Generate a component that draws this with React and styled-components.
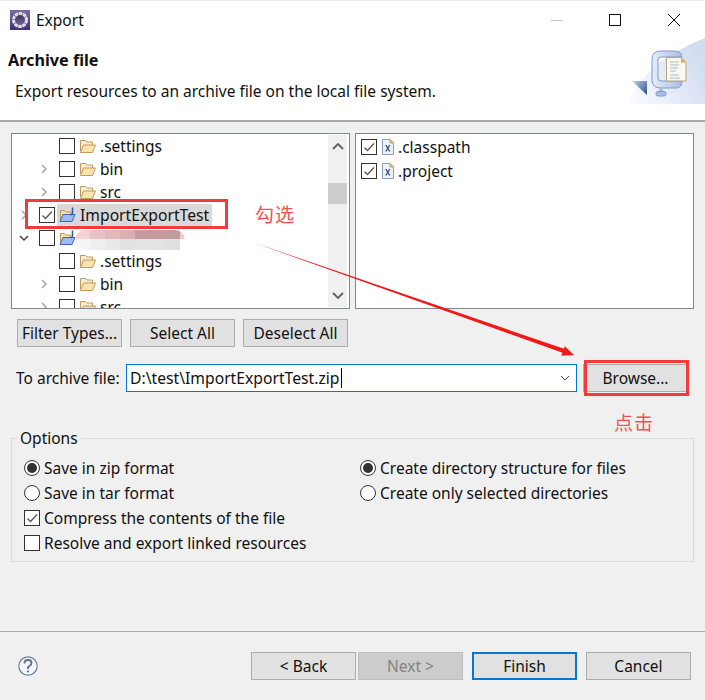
import React from 'react';
import styled, { createGlobalStyle } from 'styled-components';

const Global = createGlobalStyle`
  html, body { margin: 0; padding: 0; background: #f0f0f0; overflow: hidden; }
  * { box-sizing: border-box; }
`;

const FONT = `"Noto Sans", "Open Sans", "Noto Sans CJK SC", sans-serif`;

const Window = styled.div`
  position: relative;
  width: 705px;
  height: 700px;
  overflow: hidden;
  background: #f0f0f0;
  font-family: ${FONT};
  font-size: 15.5px;
  color: #111;
  display: flex;
  flex-direction: column;
`;

const TitleBar = styled.div`
  height: 39px;
  flex: none;
  background: #fff;
  border-top: 1px solid #eee;
  display: flex;
  align-items: center;
  padding: 0 2px 1px 10px;
  gap: 6px;
`;
const TitleText = styled.span`flex: 1; line-height: 20px;`;
const WinButtons = styled.div`display: flex;`;
const WinButton = styled.div`
  width: 58.5px;
  height: 36px;
  display: flex;
  align-items: center;
  justify-content: center;
`;

const Banner = styled.div`
  position: relative;
  height: 83px;
  flex: none;
  background: #fff;
  border-bottom: 2px solid #a9a9a9;
  padding: 0 8px;
`;
const BannerTitle = styled.div`
  font-weight: 700;
  font-size: 16.2px;
  line-height: 22px;
  margin-top: 10px;
`;
const BannerText = styled.div`
  margin: 10px 0 0 7px;
  line-height: 20px;
`;
const BannerArt = styled.svg`
  position: absolute;
  right: 0;
  top: -1px;
`;

const Lists = styled.div`
  display: flex;
  gap: 5px;
  margin: 11px 11px 0;
  height: 176px;
  flex: none;
`;
const TreePanel = styled.div`
  width: 339px;
  flex: none;
  background: #fff;
  border: 1px solid #828790;
  overflow: hidden;
  display: flex;
`;
const TreeBody = styled.div`
  flex: 1;
  overflow: hidden;
  padding-left: 7px;
`;
const FilePanel = styled.div`
  width: 339px;
  flex: none;
  background: #fff;
  border: 1px solid #828790;
  padding-top: 1px;
`;
const TreeRow = styled.div`
  height: 23px;
  display: flex;
  align-items: center;
  padding-left: ${p => p.$level * 20}px;
`;
const Twisty = styled.span`
  width: 20px;
  height: 16px;
  flex: none;
  display: flex;
  align-items: center;
`;
const Label = styled.span`
  margin-left: 4px;
  line-height: 20px;
  white-space: nowrap;
  font-size: ${p => (p.$selected ? '15.7px' : 'inherit')};
  padding-right: ${p => (p.$selected ? '3px' : 0)};
`;
const SelectedBlock = styled.span`
  display: flex;
  align-items: center;
  height: 22px;
  margin-left: 2px;
  background: ${p => (p.$on ? '#d9d9d9' : 'transparent')};
`;
const FolderSlot = styled.span`display: flex; margin-left: 3px;`;
const ProjectSlot = styled.span`display: flex; margin-left: 2px;`;
const FileRow = styled.div`
  height: 24px;
  display: flex;
  align-items: center;
  padding-left: 5px;
  gap: 5px;
`;
const FileLabel = styled.span`line-height: 20px; margin-left: -1px;`;
const CheckBoxFrame = styled.span`
  width: 16px;
  height: 16px;
  flex: none;
  background: #fff;
  border: 1px solid #333;
  display: flex;
  align-items: center;
  justify-content: center;
`;
const Scrollbar = styled.div`
  width: 19px;
  margin: 1px 2px 0 0;
  height: 172px;
  flex: none;
  background: #f0f0f0;
  display: flex;
  flex-direction: column;
  align-items: center;
  justify-content: space-between;
  padding: 7px 0;
  position: relative;
`;
const ScrollThumb = styled.div`
  position: absolute;
  top: 48px;
  left: 0;
  width: 19px;
  height: 21px;
  background: #cdcdcd;
`;

const ButtonRow = styled.div`
  display: flex;
  gap: 8px;
  margin: 10px 0 0 17px;
  flex: none;
`;
const Btn = styled.div`
  width: 105px;
  height: 28px;
  flex: none;
  display: flex;
  align-items: center;
  justify-content: center;
  background: ${p => (p.$disabled ? '#cccccc' : '#e1e1e1')};
  color: ${p => (p.$disabled ? '#838383' : '#111')};
  border: ${p => (p.$default ? '2px solid #0078d7' : p.$disabled ? '1px solid #bfbfbf' : '1px solid #adadad')};
  white-space: nowrap;
`;

const ArchiveRow = styled.div`
  display: flex;
  align-items: center;
  margin: 17px 14px 0 16px;
  height: 28px;
  flex: none;
`;
const ArchiveLabel = styled.span`
  width: 110px;
  flex: none;
  white-space: nowrap;
`;
const Combo = styled.div`
  width: 451px;
  height: 28px;
  flex: none;
  background: #fff;
  border: 1px solid #0078d7;
  display: flex;
  align-items: center;
  padding: 0 6px 0 3px;
`;
const ComboText = styled.span`
  border-right: 1px solid #000;
  font-size: 15.7px;
  line-height: 20px;
  padding-right: 1px;
`;
const ComboChevron = styled.svg`margin-left: auto;`;
const BrowseSlot = styled.div`margin-left: 6px;`;

const Options = styled.fieldset`
  margin: 37px 11px 0;
  padding: 0;
  height: 133px;
  border: 1px solid #dcdcdc;
  flex: none;
  min-width: 0;
`;
const Legend = styled.legend`
  margin-left: 6px;
  padding: 0 3px 0 2px;
  line-height: 18px;
`;
const OptionsGrid = styled.div`
  display: grid;
  grid-template-columns: 336px 1fr;
  padding: 8px 0 0 12px;
`;
const OptionColumn = styled.div`display: flex; flex-direction: column;`;
const OptionRow = styled.div`
  height: 25px;
  display: flex;
  align-items: center;
  gap: 4px;
  white-space: nowrap;
`;
const Radio = styled.span`
  width: 16px;
  height: 16px;
  flex: none;
  border-radius: 50%;
  background: #fff;
  border: 1px solid #333;
  display: flex;
  align-items: center;
  justify-content: center;
  &::after {
    content: '';
    width: 10px;
    height: 10px;
    border-radius: 50%;
    background: ${p => (p.$on ? '#333' : 'transparent')};
  }
`;

const FooterRule = styled.div`
  margin-top: 69px;
  height: 1px;
  flex: none;
  background: #a9a9a9;
`;
const Footer = styled.div`
  display: flex;
  align-items: center;
  margin: 20px 14px 0 18px;
  height: 28px;
  flex: none;
`;
const Help = styled.svg`margin-right: auto;`;
const BackNext = styled.div`display: flex; gap: 2px; margin-right: 9px;`;
const FinishCancel = styled.div`display: flex; gap: 9px;`;

const Overlay = styled.svg`
  position: absolute;
  inset: 0;
  pointer-events: none;
`;
const Note = styled.span`
  position: absolute;
  left: ${p => p.$x}px;
  top: ${p => p.$y}px;
  color: #f65050;
  font-family: "Noto Sans CJK SC", sans-serif;
  font-size: 19px;
  line-height: 24px;
  letter-spacing: 1px;
`;
const Smudge = styled.div`
  position: absolute;
  left: 75px;
  top: 230px;
  display: grid;
  grid-template-columns: repeat(7, 15px) 5px;
  grid-template-rows: 9px 11px;
  border-radius: 10px 10px 0 10px;
  overflow: hidden;
`;
const SmudgeCell = styled.span`background: ${p => p.$c};`;

const Chevron = ({ open, color = '#a6a6a6' }) => (
  <svg width="10" height="10" viewBox="0 0 10 10" fill="none" stroke={color} strokeWidth="1.5">
    <path d={open ? 'M1 3l4 4 4-4' : 'M3 1l4 4-4 4'} />
  </svg>
);

const ScrollArrow = ({ dir }) => (
  <svg width="12" height="8" viewBox="0 0 12 8" fill="none" stroke="#606060" strokeWidth="1.8">
    <path d={dir === 'up' ? 'M1 7l5-5 5 5' : 'M1 1l5 5 5-5'} />
  </svg>
);

const Tick = () => (
  <svg width="12" height="12" viewBox="0 0 12 12" fill="none" stroke="#555" strokeWidth="1.3">
    <path d="M1.5 6.5l3 3L11 2.5" />
  </svg>
);

const CheckBox = ({ on }) => <CheckBoxFrame>{on && <Tick />}</CheckBoxFrame>;

const FolderOpen = () => (
  <svg width="16" height="16" viewBox="0 0 16 16">
    <path d="M.5 13V2.500h5l1.500 1.500h5.500v3" fill="#f9ecd0" stroke="#c29a63" />
    <path d="M.5 14.500l3-7.500h12l-3 7.500z" fill="#fbe3ae" stroke="#c29a63" />
  </svg>
);

const ProjectFolder = () => (
  <svg width="17" height="16" viewBox="0 0 17 16">
    <path d="M1.500 12V3.500h4l1.300 1.500h5v3" fill="#f8e2a8" stroke="#b89b58" />
    <path d="M1 14.500l3-7h12l-3 7z" fill="#9dbcec" stroke="#3c67b5" />
    <path d="M13.500 .5v5.500q0 1.800-2.200 1.500" fill="none" stroke="#2a58b0" strokeWidth="1.500" />
  </svg>
);

const XmlFile = () => (
  <svg width="12" height="16" viewBox="0 0 12 16">
    <path d="M.5.5h7.500l3.500 3.500v11.500h-11z" fill="#eef2f8" stroke="#8c9dbb" />
    <path d="M8 .5v3.500h3.500z" fill="#d8bd82" stroke="#c5a566" />
    <path d="M3.800 6l4 6.500M7.800 6l-4 6.500" stroke="#2f4f86" strokeWidth="1.300" />
  </svg>
);

const AppIcon = () => (
  <svg width="20" height="20" viewBox="0 0 20 20">
    <defs>
      <linearGradient id="appbg" x1="0" y1="0" x2="0" y2="1">
        <stop offset="0" stopColor="#7a6ca0" />
        <stop offset="1" stopColor="#43307a" />
      </linearGradient>
      <linearGradient id="appcore" x1="0" y1="0" x2="0" y2="1">
        <stop offset="0" stopColor="#33304a" />
        <stop offset="1" stopColor="#7a6aa5" />
      </linearGradient>
    </defs>
    <rect width="20" height="20" fill="url(#appbg)" />
    <circle cx="10" cy="10" r="6.500" fill="url(#appcore)" stroke="#dfdfe6" strokeWidth="3" strokeDasharray="3.500 .6" />
  </svg>
);

const WizardArt = () => (
  <BannerArt width="76" height="66" viewBox="0 0 76 66">
    <defs>
      <linearGradient id="wash" x1="0" y1="1" x2="1" y2="0.500">
        <stop offset="0" stopColor="#fbfcfe" />
        <stop offset="1" stopColor="#d3ddf2" />
      </linearGradient>
      <linearGradient id="clamp" x1="0" y1="0" x2="1" y2="0">
        <stop offset="0" stopColor="#e6ecf8" />
        <stop offset="1" stopColor="#a9bde4" />
      </linearGradient>
      <linearGradient id="tri" x1="0" y1="0" x2="1" y2="1">
        <stop offset="0" stopColor="#c5d4ec" />
        <stop offset="1" stopColor="#234a8c" />
      </linearGradient>
    </defs>
    <path d="M0 66Q14 24 76 0V66z" fill="url(#wash)" />
    <path d="M3 43h15v14z" fill="url(#tri)" />
    <path d="M32 13h13q8 0 8 6h-21q-3 0-3 3v18q0 3 3 3h21q0 7-6 7h-15q-9 0-9-8v-21q0-8 9-8z" fill="url(#clamp)" stroke="#7f9bcb" />
    <rect x="30" y="50" width="4" height="4" fill="#a9bde4" />
    <rect x="27" y="53.500" width="10" height="4.500" rx="2" fill="#a9bde4" stroke="#7f9bcb" />
    <path d="M37.500 19.500h14.500l5 5v18.500h-19.500z" fill="#fbf9ef" stroke="#b6a77f" />
    <path d="M52 19.500l5 5h-5z" fill="#e9a24c" />
    <path d="M41 24h9M41 27h9M41 30h8M41 33h6M41 37h9M41 40h10" stroke="#a8b8d2" strokeWidth="1.200" />
  </BannerArt>
);

const FolderRow = ({ name, twisty }) => (
  <TreeRow $level={1}>
    <Twisty>{twisty && <Chevron />}</Twisty>
    <CheckBox />
    <SelectedBlock>
      <FolderSlot><FolderOpen /></FolderSlot>
      <Label>{name}</Label>
    </SelectedBlock>
  </TreeRow>
);

const smudge = [
  '#f2d2d2', '#e9c3c3', '#e4b8b8', '#d9b0b2', '#c49a9c', '#c49a9c', '#bf9c9e', '#f0c8c8',
  '#f5f5f5', '#eeeeee', '#e9e9e9', '#e2e2e2', '#e4e4e4', '#e4e4e4', '#e0e0e0', 'transparent',
];

export default function App() {
  return (
    <Window>
      <Global />
      <TitleBar>
        <AppIcon />
        <TitleText>Export</TitleText>
        <WinButtons>
          <WinButton>
            <svg width="12" height="12"><path d="M0 6.500h12" stroke="#c4c4c4" /></svg>
          </WinButton>
          <WinButton>
            <svg width="12" height="12"><rect x=".5" y=".5" width="11" height="11" fill="none" stroke="#111" /></svg>
          </WinButton>
          <WinButton>
            <svg width="12" height="12"><path d="M0 0l12 12M12 0L0 12" stroke="#111" /></svg>
          </WinButton>
        </WinButtons>
      </TitleBar>
      <Banner>
        <BannerTitle>Archive file</BannerTitle>
        <BannerText>Export resources to an archive file on the local file system.</BannerText>
        <WizardArt />
      </Banner>
      <Lists>
        <TreePanel>
          <TreeBody>
            <FolderRow name=".settings" />
            <FolderRow name="bin" twisty />
            <FolderRow name="src" twisty />
            <TreeRow $level={0}>
              <Twisty><Chevron /></Twisty>
              <CheckBox on />
              <SelectedBlock $on>
                <ProjectSlot><ProjectFolder /></ProjectSlot>
                <Label $selected>ImportExportTest</Label>
              </SelectedBlock>
            </TreeRow>
            <TreeRow $level={0}>
              <Twisty><Chevron open color="#444" /></Twisty>
              <CheckBox />
              <SelectedBlock><ProjectSlot><ProjectFolder /></ProjectSlot></SelectedBlock>
            </TreeRow>
            <FolderRow name=".settings" />
            <FolderRow name="bin" twisty />
            <FolderRow name="src" twisty />
          </TreeBody>
          <Scrollbar>
            <ScrollArrow dir="up" />
            <ScrollThumb />
            <ScrollArrow dir="down" />
          </Scrollbar>
        </TreePanel>
        <FilePanel>
          <FileRow><CheckBox on /><XmlFile /><FileLabel>.classpath</FileLabel></FileRow>
          <FileRow><CheckBox on /><XmlFile /><FileLabel>.project</FileLabel></FileRow>
        </FilePanel>
      </Lists>
      <ButtonRow>
        <Btn>Filter Types...</Btn>
        <Btn>Select All</Btn>
        <Btn>Deselect All</Btn>
      </ButtonRow>
      <ArchiveRow>
        <ArchiveLabel>To archive file:</ArchiveLabel>
        <Combo>
          <ComboText>D:\test\ImportExportTest.zip</ComboText>
          <ComboChevron width="10" height="8" viewBox="0 0 10 8" fill="none" stroke="#444">
            <path d="M1 2l4 4 4-4" />
          </ComboChevron>
        </Combo>
        <BrowseSlot><Btn>Browse...</Btn></BrowseSlot>
      </ArchiveRow>
      <Options>
        <Legend>Options</Legend>
        <OptionsGrid>
          <OptionColumn>
            <OptionRow><Radio $on />Save in zip format</OptionRow>
            <OptionRow><Radio />Save in tar format</OptionRow>
            <OptionRow><CheckBox on />Compress the contents of the file</OptionRow>
            <OptionRow><CheckBox />Resolve and export linked resources</OptionRow>
          </OptionColumn>
          <OptionColumn>
            <OptionRow><Radio $on />Create directory structure for files</OptionRow>
            <OptionRow><Radio />Create only selected directories</OptionRow>
          </OptionColumn>
        </OptionsGrid>
      </Options>
      <FooterRule />
      <Footer>
        <Help width="20" height="20" viewBox="0 0 20 20" fill="none">
          <circle cx="10" cy="10" r="9.200" stroke="#6d7f9c" strokeWidth="1.200" fill="#f4f6f9" />
          <path d="M6.500 7.500q0-3.500 3.500-3.500t3.500 3q0 2-2 3t-1.500 3" stroke="#5b6f91" strokeWidth="1.800" />
          <circle cx="10" cy="15.500" r="1.100" fill="#5b6f91" />
        </Help>
        <BackNext>
          <Btn>&lt; Back</Btn>
          <Btn $disabled>Next &gt;</Btn>
        </BackNext>
        <FinishCancel>
          <Btn $default>Finish</Btn>
          <Btn>Cancel</Btn>
        </FinishCancel>
      </Footer>

      <Smudge>
        {smudge.map((c, i) => <SmudgeCell key={i} $c={c} />)}
      </Smudge>
      <Overlay width="705" height="700" viewBox="0 0 705 700">
        <rect x="26.500" y="200.500" width="200" height="27" fill="none" stroke="#f23c3c" strokeWidth="3" />
        <rect x="585.500" y="361.500" width="102" height="33" fill="none" stroke="#f23c3c" strokeWidth="3" />
        <path d="M249 241L564.700 349.100L563.300 352.900z" fill="#f01818" />
        <path d="M574 355L561.300 355.700L564.700 346.300z" fill="#f01818" />
      </Overlay>
      <Note $x={255} $y={202}>勾选</Note>
      <Note $x={614} $y={410}>点击</Note>
    </Window>
  );
}
